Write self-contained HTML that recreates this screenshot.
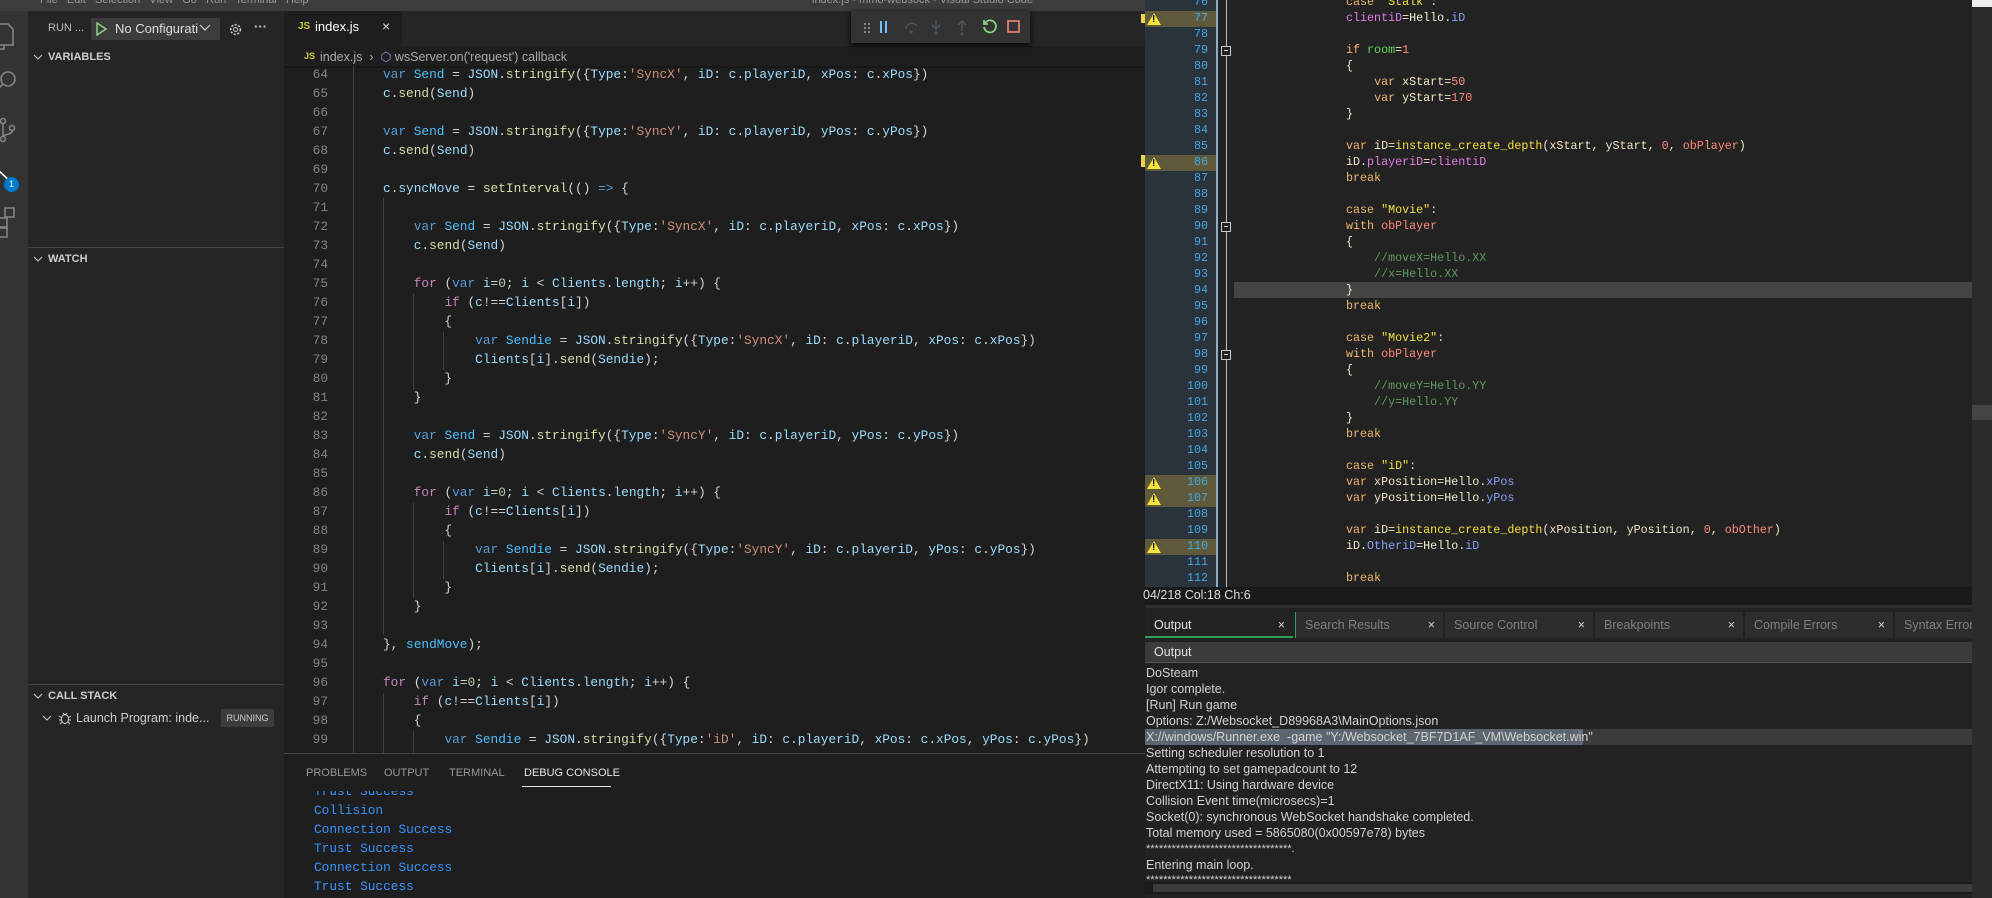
<!DOCTYPE html>
<html><head><meta charset="utf-8"><style>
*{margin:0;padding:0;box-sizing:border-box}
body{width:1992px;height:898px;overflow:hidden;background:#1e1e1e;position:relative;font-family:"Liberation Sans",sans-serif}
.a{position:absolute}
.ln{position:absolute;left:284px;width:44px;text-align:right;color:#858585;font:12.8px "Liberation Mono",monospace;height:19px;line-height:19px}
.cl{position:absolute;left:383px;color:#d4d4d4;font:12.8px "Liberation Mono",monospace;white-space:pre;height:19px;line-height:19px}
.k{color:#569cd6}.v{color:#9cdcfe}.f{color:#dcdcaa}.s{color:#ce9178}.c{color:#c586c0}.n{color:#b5cea8}.b{color:#4fc1ff}
.g{position:absolute;width:1px;background:#404040}
.rn{position:absolute;left:1145px;width:71px;height:16px;line-height:16px;text-align:right;padding-right:8px;color:#3fa9e6;font:11.7px "Liberation Mono",monospace}
.rn.w{background:#5e5a3a}
.rc{position:absolute;left:1346px;height:16px;line-height:16px;font:11.7px "Liberation Mono",monospace;white-space:pre;color:#f0e6c8}
.kw{color:#f2b46a}.st{color:#f0e040}.mg{color:#e27ae8}.gr{color:#5ed85e}.rd{color:#ff8a7a}.cm{color:#5f9a5f}.bl{color:#8aa0ff}.wh{color:#f2eed8}
.ol{position:absolute;left:1146px;font:12.5px "Liberation Sans",sans-serif;color:#d2d2d2;white-space:pre;height:16px;line-height:16px}
.warn{position:absolute;left:1147px;width:0;height:0;border-left:7px solid transparent;border-right:7px solid transparent;border-bottom:12px solid #f6e23a}
.warn:after{content:"!";position:absolute;left:-2px;top:1px;font:bold 10px "Liberation Sans";color:#000}
.tab{position:absolute;top:612px;height:26px;width:148px;background:#2d2d2d;color:#808080;font:12.5px "Liberation Sans";line-height:26px;padding-left:9px}
.tab i{position:absolute;right:8px;font-style:normal;color:#ccc}
.dc{position:absolute;left:314px;color:#3794ff;font:12.8px "Liberation Mono",monospace;height:19px;line-height:19px}
.fold{position:absolute;left:1221px;width:10px;height:10px;border:1px solid #ccc;background:#222}
.fold:after{content:"";position:absolute;left:2px;top:3px;width:4px;height:1px;background:#ddd}
</style></head><body>
<div class="a" style="left:0;top:0;width:1145px;height:11px;background:#3c3c3c"></div>
<div class="a" style="left:40px;top:-6px;font:11px 'Liberation Sans';color:#999;white-space:pre">File   Edit   Selection   View   Go   Run   Terminal   Help</div>
<div class="a" style="left:812px;top:-6px;font:11px 'Liberation Sans';color:#999;white-space:pre">index.js - mmo-websock - Visual Studio Code</div>
<div class="a" style="left:0;top:11px;width:28px;height:887px;background:#333"></div>
<svg class="a" style="left:0;top:18px" width="28" height="230" fill="none" stroke="#858585" stroke-width="1.6">
<path d="M-2 6h10l5 5v16h-15zM4 27v4h-6"/>
<circle cx="8" cy="61" r="7"/><path d="M3 66l-6 6"/>
<circle cx="3" cy="103" r="2.5"/><circle cx="12" cy="110" r="2.5"/><circle cx="3" cy="121" r="2.5"/><path d="M3 106v12M12 113c0 4-9 3-9 6"/>
<path d="M-2 152l15 14-8 3" stroke="#fff"/>
<path d="M-2 200h9v9h-9zM-2 210h9v9h-9zM5 190h9v9h-9z"/>
</svg>
<div class="a" style="left:4px;top:177px;width:15px;height:15px;border-radius:50%;background:#007acc;color:#fff;font:9px 'Liberation Sans';text-align:center;line-height:15px">1</div>
<div class="a" style="left:28px;top:11px;width:256px;height:887px;background:#252526"></div>
<div class="a" style="left:48px;top:22px;font:11px 'Liberation Sans';color:#bbb">RUN ...</div>
<div class="a" style="left:91px;top:18px;width:129px;height:22px;background:#3c3c3c"></div>
<svg class="a" style="left:95px;top:22px" width="12" height="14"><path d="M2 1l9 6-9 6z" fill="none" stroke="#89d185" stroke-width="1.5"/></svg>
<div class="a" style="left:115px;top:21px;font:13px 'Liberation Sans';color:#ddd;width:86px;overflow:hidden;white-space:nowrap">No Configurati</div>
<svg class="a" style="left:199px;top:24px" width="12" height="8"><path d="M1 1l5 5 5-5" fill="none" stroke="#ccc" stroke-width="1.2"/></svg>
<svg class="a" style="left:228px;top:22px" width="15" height="15"><circle cx="7.5" cy="7.5" r="4.8" fill="none" stroke="#ccc" stroke-width="1.6" stroke-dasharray="2 1.6"/><circle cx="7.5" cy="7.5" r="2" fill="none" stroke="#ccc"/></svg>
<div class="a" style="left:254px;top:19px;font:bold 13px 'Liberation Sans';color:#ccc">···</div>
<svg class="a" style="left:33px;top:54px" width="10" height="7"><path d="M1 1l4 4 4-4" fill="none" stroke="#ccc"/></svg>
<div class="a" style="left:48px;top:51px;font:bold 11px 'Liberation Sans';color:#ccc">VARIABLES</div>
<div class="a" style="left:28px;top:247px;width:256px;height:1px;background:#444"></div>
<svg class="a" style="left:33px;top:256px" width="10" height="7"><path d="M1 1l4 4 4-4" fill="none" stroke="#ccc"/></svg>
<div class="a" style="left:48px;top:253px;font:bold 11px 'Liberation Sans';color:#ccc">WATCH</div>
<div class="a" style="left:28px;top:684px;width:256px;height:1px;background:#444"></div>
<svg class="a" style="left:33px;top:693px" width="10" height="7"><path d="M1 1l4 4 4-4" fill="none" stroke="#ccc"/></svg>
<div class="a" style="left:48px;top:690px;font:bold 11px 'Liberation Sans';color:#ccc">CALL STACK</div>
<svg class="a" style="left:42px;top:715px" width="10" height="7"><path d="M1 1l4 4 4-4" fill="none" stroke="#ccc"/></svg>
<svg class="a" style="left:58px;top:710px" width="14" height="15" fill="none" stroke="#ccc"><ellipse cx="7" cy="9" rx="3.5" ry="4.5"/><path d="M1 6l3 2M13 6l-3 2M1 10h2.5M13 10h-2.5M2 14l2-2M12 14l-2-2M5 3l2 2 2-2"/></svg>
<div class="a" style="left:76px;top:711px;font:12.5px 'Liberation Sans';color:#ccc">Launch Program: inde...</div>
<div class="a" style="left:221px;top:709px;width:53px;height:18px;background:#3c3c3c;font:9px 'Liberation Sans';color:#ccc;text-align:center;line-height:18px">RUNNING</div>
<div class="a" style="left:284px;top:11px;width:861px;height:35px;background:#252526"></div>
<div class="a" style="left:284px;top:11px;width:118px;height:35px;background:#1e1e1e"></div>
<div class="a" style="left:298px;top:21px;font:bold 10px 'Liberation Sans';color:#cbcb41">JS</div>
<div class="a" style="left:315px;top:19px;font:13px 'Liberation Sans';color:#fff">index.js</div>
<div class="a" style="left:382px;top:18px;font:14px 'Liberation Sans';color:#ddd">×</div>
<div class="a" style="left:851px;top:11px;width:179px;height:32px;background:#333;box-shadow:0 2px 6px #000"></div>
<svg class="a" style="left:851px;top:11px" width="179" height="32">
<g fill="#888"><rect x="13" y="12" width="2" height="2"/><rect x="17" y="12" width="2" height="2"/><rect x="13" y="16" width="2" height="2"/><rect x="17" y="16" width="2" height="2"/><rect x="13" y="20" width="2" height="2"/><rect x="17" y="20" width="2" height="2"/></g>
<path d="M30 10v12M35 10v12" stroke="#75beff" stroke-width="2"/>
<path d="M55 18a6 6 0 0 1 11-3" fill="none" stroke="#4a5560" stroke-width="1.6"/><circle cx="60" cy="21" r="1.6" fill="#4a5560"/>
<path d="M85 9v9M81 14l4 4 4-4" fill="none" stroke="#4a5560" stroke-width="1.6"/><circle cx="85" cy="22" r="1.6" fill="#4a5560"/>
<path d="M111 20v-9M107 14l4-4 4 4" fill="none" stroke="#4a5560" stroke-width="1.6"/><circle cx="111" cy="23" r="1.6" fill="#4a5560"/>
<path d="M134 12a6 6 0 1 1-1 4M133 9v4h4" fill="none" stroke="#89d185" stroke-width="1.8"/>
<rect x="157" y="10" width="11" height="11" fill="none" stroke="#f48771" stroke-width="1.6"/>
</svg>
<div class="a" style="left:304px;top:51px;font:bold 9px 'Liberation Sans';color:#cbcb41">JS</div>
<div class="a" style="left:320px;top:49px;font:12.5px 'Liberation Sans';color:#aaa;white-space:pre">index.js  ›  <span style="color:#b180d7">⬡</span> wsServer.on('request') callback</div>
<div class="a" style="left:284px;top:66px;width:861px;height:2px;background:#181818"></div>
<div class="g" style="left:353px;top:66px;height:687px"></div>
<div class="g" style="left:383px;top:198px;height:437px"></div>
<div class="g" style="left:413px;top:294px;height:95px"></div>
<div class="g" style="left:413px;top:503px;height:95px"></div>
<div class="g" style="left:443px;top:332px;height:38px"></div>
<div class="g" style="left:443px;top:541px;height:38px"></div>
<div class="g" style="left:383px;top:693px;height:60px"></div>
<div class="g" style="left:413px;top:731px;height:22px"></div>
<div class="ln" style="top:65px">64</div><div class="cl" style="top:65px"><span class="k">var</span> <span class="b">Send</span> = <span class="v">JSON</span>.<span class="f">stringify</span>({<span class="v">Type</span>:<span class="s">'SyncX'</span>, <span class="v">iD</span>: <span class="v">c</span>.<span class="v">playeriD</span>, <span class="v">xPos</span>: <span class="v">c</span>.<span class="v">xPos</span>})</div>
<div class="ln" style="top:84px">65</div><div class="cl" style="top:84px"><span class="v">c</span>.<span class="f">send</span>(<span class="v">Send</span>)</div>
<div class="ln" style="top:103px">66</div>
<div class="ln" style="top:122px">67</div><div class="cl" style="top:122px"><span class="k">var</span> <span class="b">Send</span> = <span class="v">JSON</span>.<span class="f">stringify</span>({<span class="v">Type</span>:<span class="s">'SyncY'</span>, <span class="v">iD</span>: <span class="v">c</span>.<span class="v">playeriD</span>, <span class="v">yPos</span>: <span class="v">c</span>.<span class="v">yPos</span>})</div>
<div class="ln" style="top:141px">68</div><div class="cl" style="top:141px"><span class="v">c</span>.<span class="f">send</span>(<span class="v">Send</span>)</div>
<div class="ln" style="top:160px">69</div>
<div class="ln" style="top:179px">70</div><div class="cl" style="top:179px"><span class="v">c</span>.<span class="v">syncMove</span> = <span class="f">setInterval</span>(() <span class="k">=&gt;</span> {</div>
<div class="ln" style="top:198px">71</div>
<div class="ln" style="top:217px">72</div><div class="cl" style="top:217px">    <span class="k">var</span> <span class="b">Send</span> = <span class="v">JSON</span>.<span class="f">stringify</span>({<span class="v">Type</span>:<span class="s">'SyncX'</span>, <span class="v">iD</span>: <span class="v">c</span>.<span class="v">playeriD</span>, <span class="v">xPos</span>: <span class="v">c</span>.<span class="v">xPos</span>})</div>
<div class="ln" style="top:236px">73</div><div class="cl" style="top:236px">    <span class="v">c</span>.<span class="f">send</span>(<span class="v">Send</span>)</div>
<div class="ln" style="top:255px">74</div>
<div class="ln" style="top:274px">75</div><div class="cl" style="top:274px">    <span class="c">for</span> (<span class="k">var</span> <span class="v">i</span>=<span class="n">0</span>; <span class="v">i</span> &lt; <span class="v">Clients</span>.<span class="v">length</span>; <span class="v">i</span>++) {</div>
<div class="ln" style="top:293px">76</div><div class="cl" style="top:293px">        <span class="c">if</span> (<span class="v">c</span>!==<span class="v">Clients</span>[<span class="v">i</span>])</div>
<div class="ln" style="top:312px">77</div><div class="cl" style="top:312px">        {</div>
<div class="ln" style="top:331px">78</div><div class="cl" style="top:331px">            <span class="k">var</span> <span class="b">Sendie</span> = <span class="v">JSON</span>.<span class="f">stringify</span>({<span class="v">Type</span>:<span class="s">'SyncX'</span>, <span class="v">iD</span>: <span class="v">c</span>.<span class="v">playeriD</span>, <span class="v">xPos</span>: <span class="v">c</span>.<span class="v">xPos</span>})</div>
<div class="ln" style="top:350px">79</div><div class="cl" style="top:350px">            <span class="v">Clients</span>[<span class="v">i</span>].<span class="f">send</span>(<span class="v">Sendie</span>);</div>
<div class="ln" style="top:369px">80</div><div class="cl" style="top:369px">        }</div>
<div class="ln" style="top:388px">81</div><div class="cl" style="top:388px">    }</div>
<div class="ln" style="top:407px">82</div>
<div class="ln" style="top:426px">83</div><div class="cl" style="top:426px">    <span class="k">var</span> <span class="b">Send</span> = <span class="v">JSON</span>.<span class="f">stringify</span>({<span class="v">Type</span>:<span class="s">'SyncY'</span>, <span class="v">iD</span>: <span class="v">c</span>.<span class="v">playeriD</span>, <span class="v">yPos</span>: <span class="v">c</span>.<span class="v">yPos</span>})</div>
<div class="ln" style="top:445px">84</div><div class="cl" style="top:445px">    <span class="v">c</span>.<span class="f">send</span>(<span class="v">Send</span>)</div>
<div class="ln" style="top:464px">85</div>
<div class="ln" style="top:483px">86</div><div class="cl" style="top:483px">    <span class="c">for</span> (<span class="k">var</span> <span class="v">i</span>=<span class="n">0</span>; <span class="v">i</span> &lt; <span class="v">Clients</span>.<span class="v">length</span>; <span class="v">i</span>++) {</div>
<div class="ln" style="top:502px">87</div><div class="cl" style="top:502px">        <span class="c">if</span> (<span class="v">c</span>!==<span class="v">Clients</span>[<span class="v">i</span>])</div>
<div class="ln" style="top:521px">88</div><div class="cl" style="top:521px">        {</div>
<div class="ln" style="top:540px">89</div><div class="cl" style="top:540px">            <span class="k">var</span> <span class="b">Sendie</span> = <span class="v">JSON</span>.<span class="f">stringify</span>({<span class="v">Type</span>:<span class="s">'SyncY'</span>, <span class="v">iD</span>: <span class="v">c</span>.<span class="v">playeriD</span>, <span class="v">yPos</span>: <span class="v">c</span>.<span class="v">yPos</span>})</div>
<div class="ln" style="top:559px">90</div><div class="cl" style="top:559px">            <span class="v">Clients</span>[<span class="v">i</span>].<span class="f">send</span>(<span class="v">Sendie</span>);</div>
<div class="ln" style="top:578px">91</div><div class="cl" style="top:578px">        }</div>
<div class="ln" style="top:597px">92</div><div class="cl" style="top:597px">    }</div>
<div class="ln" style="top:616px">93</div>
<div class="ln" style="top:635px">94</div><div class="cl" style="top:635px">}, <span class="b">sendMove</span>);</div>
<div class="ln" style="top:654px">95</div>
<div class="ln" style="top:673px">96</div><div class="cl" style="top:673px"><span class="c">for</span> (<span class="k">var</span> <span class="v">i</span>=<span class="n">0</span>; <span class="v">i</span> &lt; <span class="v">Clients</span>.<span class="v">length</span>; <span class="v">i</span>++) {</div>
<div class="ln" style="top:692px">97</div><div class="cl" style="top:692px">    <span class="c">if</span> (<span class="v">c</span>!==<span class="v">Clients</span>[<span class="v">i</span>])</div>
<div class="ln" style="top:711px">98</div><div class="cl" style="top:711px">    {</div>
<div class="ln" style="top:730px">99</div><div class="cl" style="top:730px">        <span class="k">var</span> <span class="b">Sendie</span> = <span class="v">JSON</span>.<span class="f">stringify</span>({<span class="v">Type</span>:<span class="s">'iD'</span>, <span class="v">iD</span>: <span class="v">c</span>.<span class="v">playeriD</span>, <span class="v">xPos</span>: <span class="v">c</span>.<span class="v">xPos</span>, <span class="v">yPos</span>: <span class="v">c</span>.<span class="v">yPos</span>})</div>
<div class="a" style="left:284px;top:753px;width:861px;height:145px;background:#1e1e1e;border-top:1px solid #444;overflow:hidden">
<div class="a" style="left:22px;top:13px;font:11px 'Liberation Sans';color:#999;white-space:pre">PROBLEMS</div>
<div class="a" style="left:100px;top:13px;font:11px 'Liberation Sans';color:#999">OUTPUT</div>
<div class="a" style="left:165px;top:13px;font:11px 'Liberation Sans';color:#999">TERMINAL</div>
<div class="a" style="left:240px;top:13px;font:11px 'Liberation Sans';color:#e7e7e7">DEBUG CONSOLE</div>
<div class="a" style="left:238px;top:32px;width:89px;height:1px;background:#e7e7e7"></div>
<div class="dc" style="top:28px;left:30px;clip-path:inset(9px 0 0 0)">Trust Success</div>
<div class="dc" style="top:47px;left:30px">Collision</div>
<div class="dc" style="top:66px;left:30px">Connection Success</div>
<div class="dc" style="top:85px;left:30px">Trust Success</div>
<div class="dc" style="top:104px;left:30px">Connection Success</div>
<div class="dc" style="top:123px;left:30px">Trust Success</div>
</div>
<div class="a" style="left:1141px;top:14px;width:4px;height:9px;background:#e6d84a"></div>
<div class="a" style="left:1141px;top:155px;width:4px;height:12px;background:#e6d84a"></div>
<div class="a" style="left:1145px;top:0;width:847px;height:898px;background:#222"></div>
<div class="a" style="left:1145px;top:0;width:71px;height:588px;background:#2a323c"></div>
<div class="a" style="left:1216px;top:0;width:2px;height:588px;background:#8ab0d0"></div>
<div class="a" style="left:1226px;top:0;width:1px;height:588px;background:#bbb"></div>
<div class="a" style="left:1234px;top:282px;width:738px;height:16px;background:#444"></div>
<div class="a" style="left:1972px;top:0;width:20px;height:898px;background:#2b2b2b"></div>
<div class="a" style="left:1972px;top:0;width:20px;height:7px;background:#eee"></div>
<div class="a" style="left:1972px;top:405px;width:20px;height:15px;background:#444"></div>
<div class="rn" style="top:-5px">76</div><div class="rc" style="top:-5px"><span class="kw">case</span> <span class="st">"Stalk"</span>:</div>
<div class="rn w" style="top:11px">77</div><div class="warn" style="top:13px"></div><div class="rc" style="top:11px"><span class="mg">clientiD</span>=<span class="wh">Hello</span>.<span class="bl">iD</span></div>
<div class="rn" style="top:27px">78</div>
<div class="rn" style="top:43px">79</div><div class="fold" style="top:46px"></div><div class="rc" style="top:43px"><span class="kw">if</span> <span class="gr">room</span>=<span class="rd">1</span></div>
<div class="rn" style="top:59px">80</div><div class="rc" style="top:59px">{</div>
<div class="rn" style="top:75px">81</div><div class="rc" style="top:75px">    <span class="kw">var</span> xStart=<span class="rd">50</span></div>
<div class="rn" style="top:91px">82</div><div class="rc" style="top:91px">    <span class="kw">var</span> yStart=<span class="rd">170</span></div>
<div class="rn" style="top:107px">83</div><div class="rc" style="top:107px">}</div>
<div class="rn" style="top:123px">84</div>
<div class="rn" style="top:139px">85</div><div class="rc" style="top:139px"><span class="kw">var</span> iD=<span class="st">instance_create_depth</span>(xStart, yStart, <span class="rd">0</span>, <span class="rd">obPlayer</span>)</div>
<div class="rn w" style="top:155px">86</div><div class="warn" style="top:157px"></div><div class="rc" style="top:155px">iD.<span class="mg">playeriD</span>=<span class="mg">clientiD</span></div>
<div class="rn" style="top:171px">87</div><div class="rc" style="top:171px"><span class="kw">break</span></div>
<div class="rn" style="top:187px">88</div>
<div class="rn" style="top:203px">89</div><div class="rc" style="top:203px"><span class="kw">case</span> <span class="st">"Movie"</span>:</div>
<div class="rn" style="top:219px">90</div><div class="fold" style="top:222px"></div><div class="rc" style="top:219px"><span class="kw">with</span> <span class="rd">obPlayer</span></div>
<div class="rn" style="top:235px">91</div><div class="rc" style="top:235px">{</div>
<div class="rn" style="top:251px">92</div><div class="rc cm" style="top:251px">    //moveX=Hello.XX</div>
<div class="rn" style="top:267px">93</div><div class="rc cm" style="top:267px">    //x=Hello.XX</div>
<div class="rn" style="top:283px">94</div><div class="rc" style="top:283px">}</div>
<div class="rn" style="top:299px">95</div><div class="rc" style="top:299px"><span class="kw">break</span></div>
<div class="rn" style="top:315px">96</div>
<div class="rn" style="top:331px">97</div><div class="rc" style="top:331px"><span class="kw">case</span> <span class="st">"Movie2"</span>:</div>
<div class="rn" style="top:347px">98</div><div class="fold" style="top:350px"></div><div class="rc" style="top:347px"><span class="kw">with</span> <span class="rd">obPlayer</span></div>
<div class="rn" style="top:363px">99</div><div class="rc" style="top:363px">{</div>
<div class="rn" style="top:379px">100</div><div class="rc cm" style="top:379px">    //moveY=Hello.YY</div>
<div class="rn" style="top:395px">101</div><div class="rc cm" style="top:395px">    //y=Hello.YY</div>
<div class="rn" style="top:411px">102</div><div class="rc" style="top:411px">}</div>
<div class="rn" style="top:427px">103</div><div class="rc" style="top:427px"><span class="kw">break</span></div>
<div class="rn" style="top:443px">104</div>
<div class="rn" style="top:459px">105</div><div class="rc" style="top:459px"><span class="kw">case</span> <span class="st">"iD"</span>:</div>
<div class="rn w" style="top:475px">106</div><div class="warn" style="top:477px"></div><div class="rc" style="top:475px"><span class="kw">var</span> xPosition=<span class="wh">Hello</span>.<span class="bl">xPos</span></div>
<div class="rn w" style="top:491px">107</div><div class="warn" style="top:493px"></div><div class="rc" style="top:491px"><span class="kw">var</span> yPosition=<span class="wh">Hello</span>.<span class="bl">yPos</span></div>
<div class="rn" style="top:507px">108</div>
<div class="rn" style="top:523px">109</div><div class="rc" style="top:523px"><span class="kw">var</span> iD=<span class="st">instance_create_depth</span>(xPosition, yPosition, <span class="rd">0</span>, <span class="rd">obOther</span>)</div>
<div class="rn w" style="top:539px">110</div><div class="warn" style="top:541px"></div><div class="rc" style="top:539px">iD.<span class="bl">OtheriD</span>=<span class="wh">Hello</span>.<span class="bl">iD</span></div>
<div class="rn" style="top:555px">111</div>
<div class="rn" style="top:571px">112</div><div class="rc" style="top:571px"><span class="kw">break</span></div>
<div class="a" style="left:1145px;top:587px;width:827px;height:18px;background:#1a1a1a"></div>
<div class="a" style="left:1143px;top:588px;font:12.5px 'Liberation Sans';color:#ddd">04/218 Col:18 Ch:6</div>
<div class="a" style="left:1145px;top:605px;width:827px;height:3px;background:#2e2e2e"></div>
<div class="tab" style="left:1145px;background:#222;color:#e0e0e0;border-bottom:2px solid #2aa05a">Output<i>×</i></div>
<div class="tab" style="left:1295px;border-left:1px solid #2aa05a">Search Results<i>×</i></div>
<div class="tab" style="left:1445px">Source Control<i>×</i></div>
<div class="tab" style="left:1595px">Breakpoints<i>×</i></div>
<div class="tab" style="left:1745px">Compile Errors<i>×</i></div>
<div class="tab" style="left:1895px;width:77px;overflow:hidden;white-space:nowrap">Syntax Errors</div>
<div class="a" style="left:1145px;top:642px;width:827px;height:21px;background:#3b3b3b;border-bottom:1px solid #555;font:12.5px 'Liberation Sans';color:#e0e0e0;line-height:20px;padding-left:9px">Output</div>
<div class="a" style="left:1145px;top:729px;width:438px;height:16px;background:#5d6670"></div>
<div class="a" style="left:1583px;top:729px;width:389px;height:16px;background:#3b3b3b"></div>
<div class="ol" style="top:665px">DoSteam</div>
<div class="ol" style="top:681px">Igor complete.</div>
<div class="ol" style="top:697px">[Run] Run game</div>
<div class="ol" style="top:713px">Options: Z:/Websocket_D89968A3\MainOptions.json</div>
<div class="ol" style="top:729px">X://windows/Runner.exe  -game "Y:/Websocket_7BF7D1AF_VM\Websocket.win"</div>
<div class="ol" style="top:745px">Setting scheduler resolution to 1</div>
<div class="ol" style="top:761px">Attempting to set gamepadcount to 12</div>
<div class="ol" style="top:777px">DirectX11: Using hardware device</div>
<div class="ol" style="top:793px">Collision Event time(microsecs)=1</div>
<div class="ol" style="top:809px">Socket(0): synchronous WebSocket handshake completed.</div>
<div class="ol" style="top:825px">Total memory used = 5865080(0x00597e78) bytes</div>
<div class="ol" style="top:841px;font-size:11px">**********************************.</div>
<div class="ol" style="top:857px">Entering main loop.</div>
<div class="ol" style="top:872px;font-size:11px">**********************************</div>
<div class="a" style="left:1145px;top:882px;width:827px;height:12px;background:#1a1a1a"></div>
<div class="a" style="left:1153px;top:884px;width:819px;height:8px;background:#3d3d3d"></div>
</body></html>
